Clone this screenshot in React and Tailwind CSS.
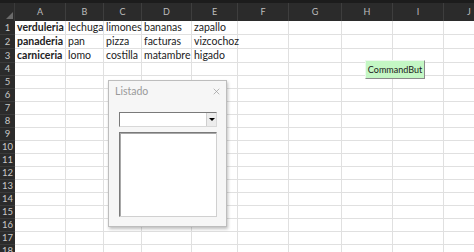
import React from 'react';

// anchos de columna medidos sobre la captura
const cols = [
    { l: 'A', w: 'w-[51px]' },
    { l: 'B', w: 'w-[38px]' },
    { l: 'C', w: 'w-[38px]' },
    { l: 'D', w: 'w-[50px]' },
    { l: 'E', w: 'w-[46px]' },
    { l: 'F', w: 'w-[51px]' },
    { l: 'G', w: 'w-[53px]' },
    { l: 'H', w: 'w-[51px]' },
    { l: 'I', w: 'w-[51px]' },
    { l: 'J', w: 'w-[51px]' },
];

const data = [
    ['verduleria', 'lechuga', 'limones', 'bananas', 'zapallo'],
    ['panaderia', 'pan', 'pizza', 'facturas', 'vizcochoz'],
    ['carniceria', 'lomo', 'costilla', 'matambre', 'higado'],
];

export default function App() {
    const rows = Array.from({ length: 18 }, (_, i) => i + 1);

    return (
        <div className="relative w-[474px] h-[252px] overflow-hidden bg-white font-['Lato',sans-serif] text-[#222]">

            {/* cabecera de columnas */}
            <div className="flex h-[21px] bg-[#2b2b2b] border-t-[3px] border-[#1c1c1c]">
                <div className="w-[15px] shrink-0 relative border-r border-[#3a3a3a]">
                    <div className="absolute right-[1px] bottom-[2px] w-0 h-0 border-l-[7px] border-l-transparent border-b-[7px] border-b-[#6a6a6a]"></div>
                </div>
                {cols.map((c) => (
                    <div key={c.l} className={`${c.w} shrink-0 flex items-center justify-center border-r border-[#3e3e3e] text-[9px] text-[#bdbdbd]`}>
                        {c.l}
                    </div>
                ))}
            </div>

            {/* filas */}
            {rows.map((r) => (
                <div key={r} className={`flex ${r <= 3 ? 'h-[14px]' : 'h-[13px]'}`}>
                    <div className="w-[15px] shrink-0 flex items-center justify-center bg-[#2b2b2b] border-b border-[#3a3a3a] text-[9.5px] leading-none text-[#c8c8c8]">
                        {r}
                    </div>
                    {cols.map((c, ci) => {
                        const v = data[r - 1]?.[ci];
                        return (
                            <div key={c.l} className={`${c.w} shrink-0 flex items-center pl-[2px] border-r border-b border-[#e0e0e0] text-[10.5px] whitespace-nowrap overflow-visible ${ci === 0 ? 'font-bold' : ''}`}>
                                {v}
                            </div>
                        );
                    })}
                </div>
            ))}

            {/* formulario Listado */}
            <div className="absolute left-[108px] top-[80px] w-[119px] h-[147px] bg-[#f6f6f6] border border-[#bdbdbd] shadow-[1px_2px_3px_rgba(0,0,0,0.25)] flex flex-col">
                <div className="flex items-center justify-between h-[21px] pl-[6px] pr-[6px]">
                    <span className="text-[10.5px] text-[#9a9a9a]">Listado</span>
                    <svg className="w-[7px] h-[7px]" viewBox="0 0 10 10" fill="none" stroke="#9a9a9a" strokeWidth="1"><path d="M1 1l8 8M9 1l-8 8" /></svg>
                </div>
                <div className="flex flex-col gap-[5px] pl-[10px] pt-[10px]">
                    {/* combo */}
                    <div className="flex w-[98px] h-[15px] bg-white border border-[#7a7a7a] border-r-[#d8d8d8] border-b-[#d8d8d8]">
                        <div className="flex-1"></div>
                        <div className="w-[10px] flex items-center justify-center bg-[#ececec] border-l border-[#cfcfcf]">
                            <div className="w-0 h-0 border-l-[3px] border-r-[3px] border-t-[3px] border-l-transparent border-r-transparent border-t-black"></div>
                        </div>
                    </div>
                    {/* lista */}
                    <div className="w-[98px] h-[85px] bg-white border border-[#7a7a7a] border-r-[#d0d0d0] border-b-[#d0d0d0] shadow-[inset_1px_1px_0_#a8a8a8]"></div>
                </div>
            </div>

            {/* boton */}
            <div className="absolute left-[365px] top-[60px] w-[60px] h-[19px] flex items-center justify-center bg-[#c4f7c4] border border-[#eef8ee] border-r-[#8a8a8a] border-b-[#8a8a8a] text-[9px] text-[#1a1a1a] whitespace-nowrap overflow-hidden">
                CommandBut
            </div>
        </div>
    );
}
